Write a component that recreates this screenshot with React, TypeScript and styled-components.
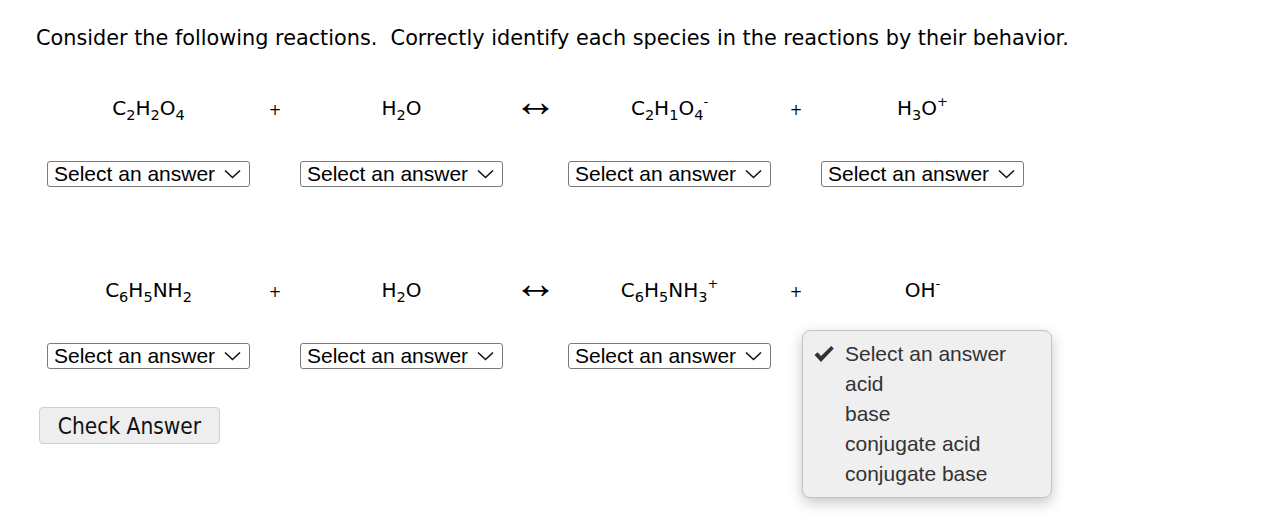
import * as React from "react";
import styled, { createGlobalStyle } from "styled-components";

const GlobalStyle = createGlobalStyle`
  html, body {
    margin: 0;
    padding: 0;
    background: #ffffff;
  }
`;

const Page = styled.div`
  min-height: 528px;
  box-sizing: border-box;
  padding: 26px 0 0 36px;
  font-family: "DejaVu Sans", sans-serif;
  color: #000;
`;

const Title = styled.div`
  font-size: 20.8px;
  line-height: 24px;
  white-space: pre;
`;

const Reaction = styled.div<{ $gapTop: number }>`
  display: grid;
  grid-template-columns: 203px 50px 203px 65px 203px 50px 203px;
  grid-template-rows: 30px 26px;
  row-gap: 38px;
  margin: ${(p) => p.$gapTop}px 0 0 11px;
`;

const Species = styled.div`
  text-align: center;
  font-size: 20px;
  line-height: 30px;
  white-space: nowrap;
`;

const Sub = styled.sub`
  font-size: 14.5px;
  vertical-align: -5px;
  line-height: 0;
`;

const Sup = styled.sup`
  font-size: 13px;
  vertical-align: 9px;
  line-height: 0;
`;

const Plus = styled.div`
  text-align: center;
  font-size: 15px;
  line-height: 30px;
  padding-top: 2px;
`;

const Arrow = styled.div`
  height: 30px;
  text-align: center;
  font-family: "Liberation Serif", "DejaVu Serif", serif;
  font-size: 44px;
  line-height: 18px;
`;

const SelectCell = styled.div`
  position: relative;
`;

const SelectBox = styled.div`
  box-sizing: border-box;
  height: 26px;
  width: 203px;
  border: 1px solid #7a7a7a;
  border-radius: 3px;
  background: #fff;
  display: flex;
  align-items: center;
  justify-content: space-between;
  padding: 0 8px 0 6px;
  font-family: "Liberation Sans", Arial, sans-serif;
  font-size: 21px;
  color: #000;
`;

const Chevron = () => (
  <svg width="17" height="10" viewBox="0 0 17 10">
    <path d="M1 1.5 L8.5 8.5 L16 1.5" fill="none" stroke="#111" strokeWidth="1.6" />
  </svg>
);

const Menu = styled.div`
  position: absolute;
  left: -19px;
  top: -13px;
  width: 250px;
  box-sizing: border-box;
  padding: 8px 0;
  background: #efefef;
  border: 1px solid #c4c4c4;
  border-radius: 8px;
  box-shadow: 0 5px 14px rgba(0, 0, 0, 0.22);
  z-index: 5;
`;

const MenuItem = styled.div`
  position: relative;
  height: 30px;
  line-height: 30px;
  padding-left: 42px;
  font-family: "Liberation Sans", Arial, sans-serif;
  font-size: 21px;
  color: #333;
`;

const Check = styled.svg`
  position: absolute;
  left: 10px;
  top: 6px;
`;

const CheckButton = styled.button`
  display: block;
  margin: 38px 0 0 3px;
  width: 181px;
  height: 37px;
  box-sizing: border-box;
  border: 1px solid #cfcfcf;
  border-radius: 4px;
  background: #eeeeee;
  font-family: "DejaVu Sans Condensed", "DejaVu Sans", sans-serif;
  font-size: 22.5px;
  color: #111;
  padding: 0;
`;

const options = ["Select an answer", "acid", "base", "conjugate acid", "conjugate base"];

const Select: React.FC<{ open?: boolean }> = ({ open }) => (
  <SelectCell>
    <SelectBox>
      <span>Select an answer</span>
      <Chevron />
    </SelectBox>
    {open && (
      <Menu>
        {options.map((o, i) => (
          <MenuItem key={o}>
            {i === 0 && (
              <Check width="22" height="18" viewBox="0 0 22 18">
                <path d="M1.5 10 L4.6 7.2 L8 11 L18.2 1 L20.8 3.5 L8 17 Z" fill="#333" />
              </Check>
            )}
            {o}
          </MenuItem>
        ))}
      </Menu>
    )}
  </SelectCell>
);

const ARROW = "\u2194";

export default function App() {
  return (
    <>
      <GlobalStyle />
      <Page>
        <Title>{"Consider the following reactions.  Correctly identify each species in the reactions by their behavior."}</Title>

        <Reaction $gapTop={43}>
          <Species>C<Sub>2</Sub>H<Sub>2</Sub>O<Sub>4</Sub></Species>
          <Plus>+</Plus>
          <Species>H<Sub>2</Sub>O</Species>
          <Arrow>{ARROW}</Arrow>
          <Species>C<Sub>2</Sub>H<Sub>1</Sub>O<Sub>4</Sub><Sup>-</Sup></Species>
          <Plus>+</Plus>
          <Species>H<Sub>3</Sub>O<Sup>+</Sup></Species>
          <Select />
          <div />
          <Select />
          <div />
          <Select />
          <div />
          <Select />
        </Reaction>

        <Reaction $gapTop={88}>
          <Species>C<Sub>6</Sub>H<Sub>5</Sub>NH<Sub>2</Sub></Species>
          <Plus>+</Plus>
          <Species>H<Sub>2</Sub>O</Species>
          <Arrow>{ARROW}</Arrow>
          <Species>C<Sub>6</Sub>H<Sub>5</Sub>NH<Sub>3</Sub><Sup>+</Sup></Species>
          <Plus>+</Plus>
          <Species>OH<Sup>-</Sup></Species>
          <Select />
          <div />
          <Select />
          <div />
          <Select />
          <div />
          <Select open />
        </Reaction>

        <CheckButton>Check Answer</CheckButton>
      </Page>
    </>
  );
}
